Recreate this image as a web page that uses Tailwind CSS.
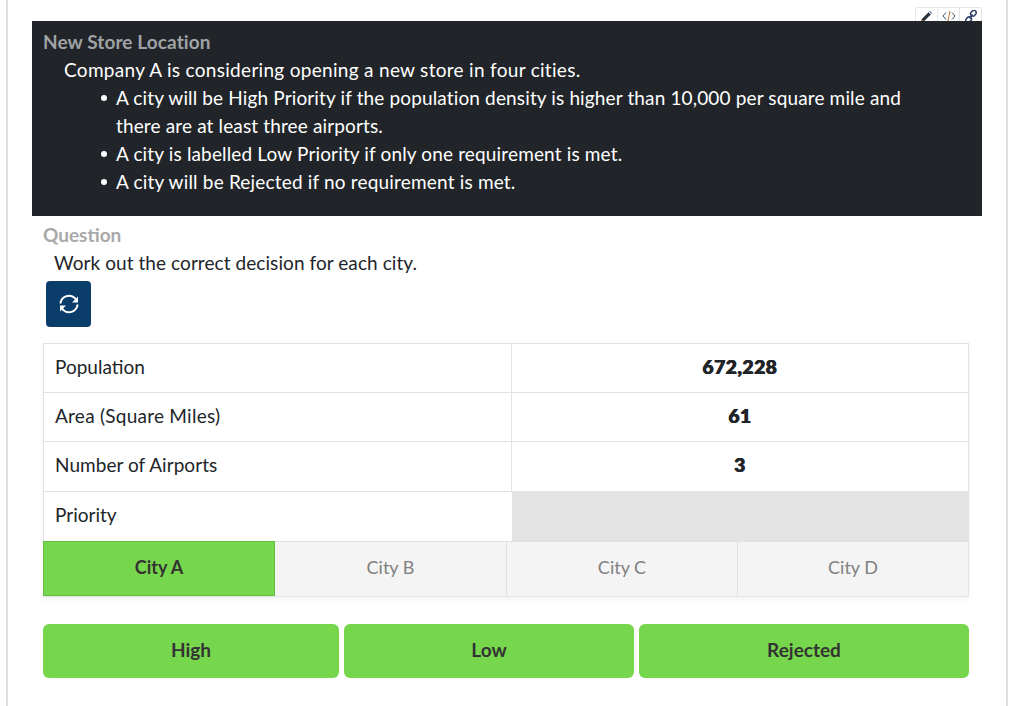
<!DOCTYPE html>
<html><head><meta charset="utf-8"><script src="https://cdn.jsdelivr.net/npm/@tailwindcss/browser@4"></script></head>
<body class="bg-white overflow-hidden">
<div class="relative ml-[6px] w-[1002px] h-[706px] border-x-2 border-[#dcdfe0] font-['Lato','Liberation_Sans',sans-serif] text-[19px] text-[#212529] overflow-hidden">
  <div class="absolute left-[907px] top-[7px] flex h-[20px] w-[67px] border border-[#e6e6e6] rounded-[2px] bg-white">
    <div class="flex-1 flex justify-center pt-[3px] border-r border-[#e6e6e6]"><svg class="w-[11px] h-[11px]" viewBox="0 0 11 11"><path d="M0 11l.8-3L7.600 1.200l2.200 2.200L3 10.200z" fill="#26303c"/><path d="M8.200.6l.8-.6 2 2-.6.8z" fill="#33568a"/><path d="M0 11l.8-3 2.200 2.200z" fill="#a9703c"/></svg></div>
    <div class="flex-1 flex justify-center pt-[2px] border-r border-[#e6e6e6]"><svg class="w-[14px] h-[12px]" viewBox="0 0 14 12" fill="none" stroke-width="1"><path d="M4 2.500L1 6l3 3.500M10 2.500L13 6l-3 3.500" stroke="#3e5870"/><path d="M8 1L6 11" stroke="#b9793f"/></svg></div>
    <div class="flex-1 flex justify-center pt-[2px]"><svg class="w-[12px] h-[13px]" viewBox="0 0 12 13" fill="none" stroke="#2c3a66" stroke-width="1.500"><rect x="5.400" y="1" width="6" height="4.500" rx="2" transform="rotate(-50 8.400 3.250)"/><rect x="0.600" y="7.500" width="6" height="4.500" rx="2" transform="rotate(-50 3.600 9.750)"/><path d="M4.500 8.500l3-4"/></svg></div>
  </div>
  <div class="absolute left-[24px] top-[21px] w-[950px] h-[195px] bg-[#212529] text-white pl-[11px] pt-[7px]">
    <div class="leading-[28px] font-bold text-[#a0a3a6] tracking-[0.1px]">New Store Location</div>
    <div class="pl-[21px] leading-[28px] tracking-[0.3px]">Company A is considering opening a new store in four cities.</div>
    <ul class="pl-[57px] pr-[46px] leading-[28px]">
      <li class="flex"><span class="shrink-0 w-[16px]"><span class="block ml-[1px] mt-[11px] w-[6px] h-[6px] rounded-full bg-white"></span></span><span class="tracking-[0.14px]">A city will be High Priority if the population density is higher than 10,000 per square mile and there are at least three airports.</span></li>
      <li class="flex"><span class="shrink-0 w-[16px]"><span class="block ml-[1px] mt-[11px] w-[6px] h-[6px] rounded-full bg-white"></span></span><span class="tracking-[0.15px]">A city is labelled Low Priority if only one requirement is met.</span></li>
      <li class="flex"><span class="shrink-0 w-[16px]"><span class="block ml-[1px] mt-[11px] w-[6px] h-[6px] rounded-full bg-white"></span></span><span class="tracking-[0.18px]">A city will be Rejected if no requirement is met.</span></li>
    </ul>
  </div>
  <div class="absolute left-[35px] top-[221px] w-[926px]">
    <div class="leading-[28px] font-bold text-[#a9a9a9]">Question</div>
    <div class="pl-[11px] leading-[28px] tracking-[0.07px]">Work out the correct decision for each city.</div>
    <button class="mt-[4px] ml-[3px] w-[45px] h-[46px] rounded-[4px] bg-[#0b3d6b] flex items-center justify-center">
      <svg class="w-[20px] h-[20px]" viewBox="0 0 20 20" fill="none" stroke="#fff" stroke-width="2"><path d="M1.500 9.500A8.500 8.500 0 0 1 15.500 3.800L17 5.500"/><path d="M18.500 10.500A8.500 8.500 0 0 1 4.500 16.200L3 14.500"/><path d="M19 2.500V8.500H13z" fill="#fff" stroke="none"/><path d="M1 17.500V11.500H7z" fill="#fff" stroke="none"/></svg>
    </button>
    <div class="mt-[16px] border border-[#e3e3e3] shadow-[0_2px_6px_rgba(0,0,0,0.06)]">
      <div class="flex h-[49px] border-b border-[#e3e3e3]"><div class="w-[468px] border-r border-[#e3e3e3] pl-[11px] pb-[2px] flex items-center">Population</div><div class="flex-1 flex items-center justify-center pb-[2px] font-black tracking-[0.6px] [text-shadow:0.5px_0_0_#212529,-0.5px_0_0_#212529]">672,228</div></div>
      <div class="flex h-[49px] border-b border-[#e3e3e3]"><div class="w-[468px] border-r border-[#e3e3e3] pl-[11px] pb-[2px] flex items-center tracking-[0.25px]">Area (Square Miles)</div><div class="flex-1 flex items-center justify-center pb-[2px] font-black tracking-[0.6px] [text-shadow:0.5px_0_0_#212529,-0.5px_0_0_#212529]">61</div></div>
      <div class="flex h-[50px] border-b border-[#e3e3e3]"><div class="w-[468px] border-r border-[#e3e3e3] pl-[11px] pb-[2px] flex items-center tracking-[0.05px]">Number of Airports</div><div class="flex-1 flex items-center justify-center pb-[2px] font-black tracking-[0.6px] [text-shadow:0.5px_0_0_#212529,-0.5px_0_0_#212529]">3</div></div>
      <div class="flex h-[49px]"><div class="w-[468px] pl-[11px] pb-[2px] flex items-center">Priority</div><div class="flex-1 bg-[#e3e3e3]"></div></div>
      <div class="flex h-[55px] text-[18px]">
        <div class="-ml-px w-[232px] bg-[#77d74c] border border-[#67bd41] pb-[2px] flex items-center justify-center font-bold text-[#333]">City A</div>
        <div class="w-[232px] bg-[#f4f4f4] border-r border-t border-[#e0e0e0] pb-[4px] flex items-center justify-center text-[#808080]">City B</div>
        <div class="w-[231px] bg-[#f4f4f4] border-r border-t border-[#e0e0e0] pb-[4px] flex items-center justify-center text-[#808080]">City C</div>
        <div class="flex-1 bg-[#f4f4f4] border-t border-[#e0e0e0] pb-[4px] flex items-center justify-center text-[#808080]">City D</div>
      </div>
    </div>
  </div>
  <div class="absolute left-[35px] top-[624px] flex gap-[5px] h-[54px] w-[926px] font-bold text-[#333]">
    <button class="w-[296px] rounded-[6px] bg-[#77d74c] pb-[2px]">High</button>
    <button class="w-[290px] rounded-[6px] bg-[#77d74c] pb-[2px]">Low</button>
    <button class="flex-1 rounded-[6px] bg-[#77d74c] pb-[2px]">Rejected</button>
  </div>
</div>
</body></html>
